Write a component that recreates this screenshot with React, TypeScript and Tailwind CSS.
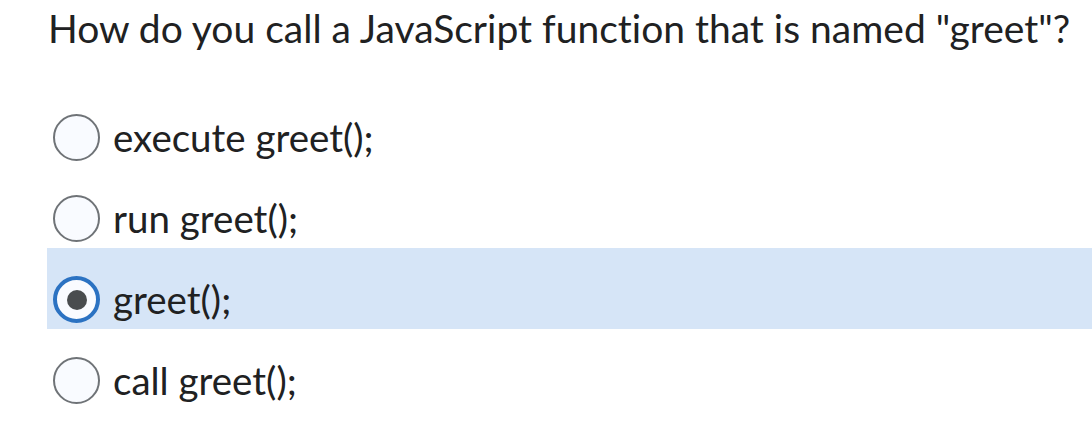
import React from "react";

const options = [
  { label: "execute greet();", selected: false },
  { label: "run greet();", selected: false },
  { label: "greet();", selected: true },
  { label: "call greet();", selected: false },
];

export default function App() {
  return (
    <div
      className="w-[1092px] h-[422px] bg-white text-[#202122] overflow-hidden [font-variant-ligatures:none]"
      style={{ fontFamily: "Lato, 'Noto Sans', sans-serif" }}
    >
      <div className="pl-[47px] pt-[2px]">
        <h1 className="text-[39px] leading-[52px] font-normal pl-[1px]">
          How do you call a JavaScript function that is named "greet"?
        </h1>
        <div className="mt-[32px] flex flex-col">
          {options.map((o) => (
            <div
              key={o.label}
              className={`h-[81px] pt-[28px] pl-[6px] ${
                o.selected ? "bg-[#d6e5f7]" : ""
              }`}
            >
              <div className="h-[47px] flex items-center gap-[13px]">
                {o.selected ? (
                  <div className="w-[47px] h-[47px] rounded-full border-[4px] border-[#2b72c2] bg-[#f9fbff] flex items-center justify-center shrink-0">
                    <div className="w-[20px] h-[20px] rounded-full bg-[#494c4e]" />
                  </div>
                ) : (
                  <div className="w-[47px] h-[47px] rounded-full border-[2px] border-[#6f7377] bg-[#f9fbff] shrink-0" />
                )}
                <span className="text-[38.5px] leading-none">{o.label}</span>
              </div>
            </div>
          ))}
        </div>
      </div>
    </div>
  );
}
